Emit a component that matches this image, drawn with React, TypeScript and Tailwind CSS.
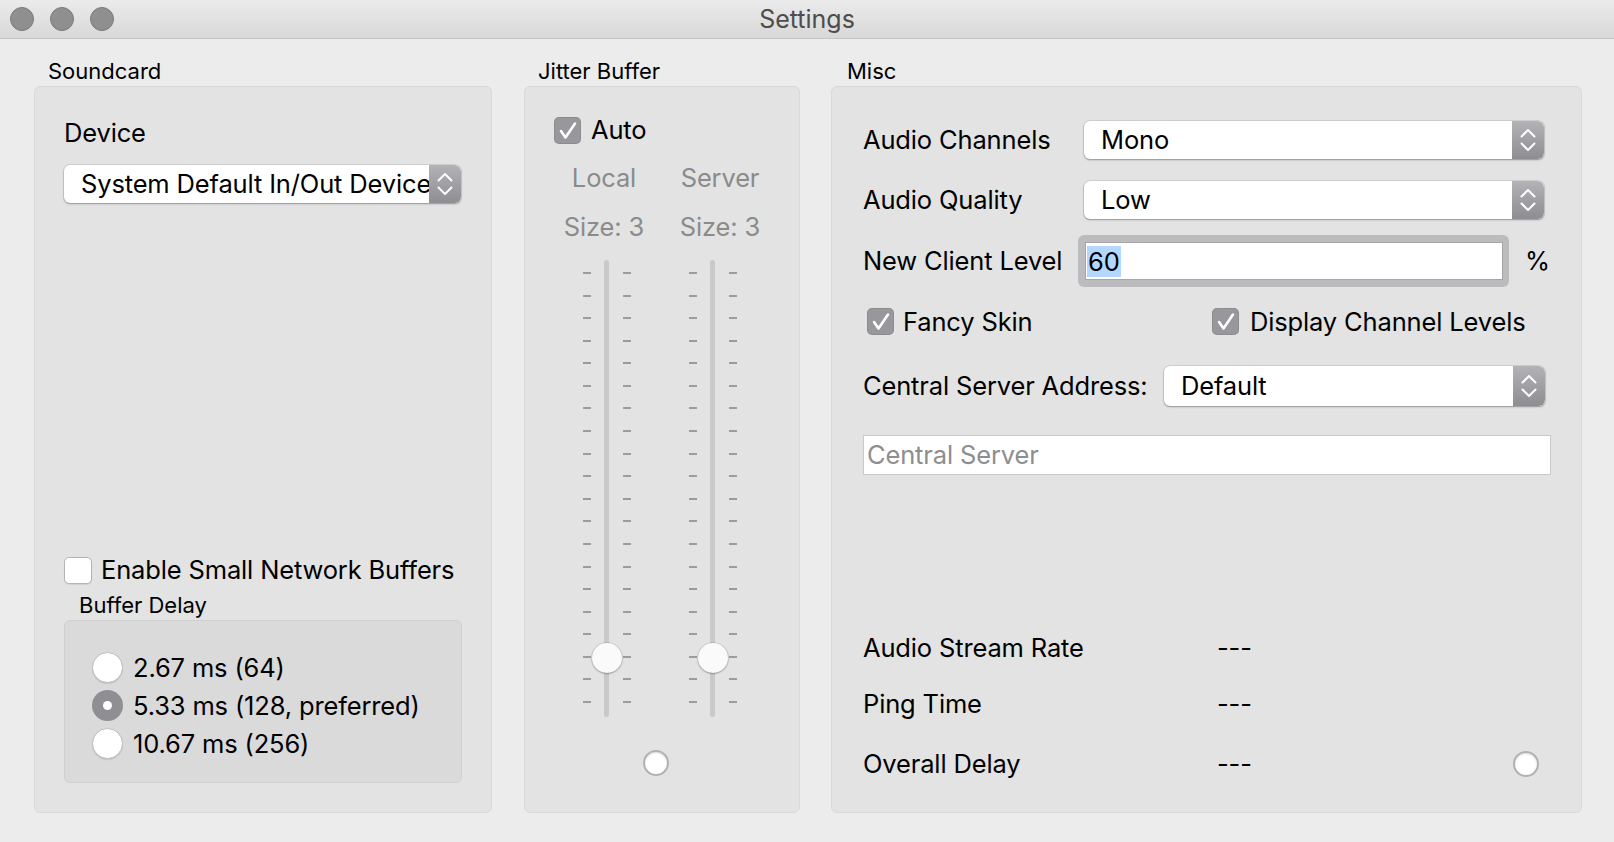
import React from "react";

const body = "text-[25.5px] leading-[30px] tracking-[-0.15px]";

// stepper arrows shown on the right of a popup button
function Stepper() {
  return (
    <div className="flex h-full w-[32px] shrink-0 items-center justify-center rounded-r-[6px] bg-gradient-to-b from-[#b3b3b7] to-[#8d8d92]">
      <svg width="32" height="38" viewBox="0 0 32 38" fill="none">
        <polyline points="9.5,15.5 16,9 22.5,15.5" stroke="white" strokeWidth="2" strokeLinecap="round" strokeLinejoin="round" />
        <polyline points="9.5,22.5 16,29 22.5,22.5" stroke="white" strokeWidth="2" strokeLinecap="round" strokeLinejoin="round" />
      </svg>
    </div>
  );
}

function Select({ value, className }: { value: string; className: string }) {
  return (
    <div className={`flex overflow-hidden rounded-[6px] bg-white shadow-[0_0_0_1px_rgba(0,0,0,0.08),0_1px_2px_rgba(0,0,0,0.3)] ${className}`}>
      <div className="flex flex-1 items-center overflow-hidden whitespace-nowrap pl-[17px] text-black">{value}</div>
      <Stepper />
    </div>
  );
}

function Checkbox({ checked }: { checked: boolean }) {
  if (!checked) {
    return <div className="h-[27px] w-[28px] shrink-0 rounded-[5px] border border-[#b4b4b4] bg-white shadow-[0_1px_1px_rgba(0,0,0,0.08)]" />;
  }
  return (
    <div className="flex h-[27px] w-[27px] shrink-0 items-center justify-center rounded-[5px] bg-[#98989c] shadow-[inset_0_0_0_1px_rgba(0,0,0,0.08)]">
      <svg width="27" height="27" viewBox="0 0 27 27" fill="none">
        <polyline points="7,14 11.5,20.5 21,6.5" stroke="white" strokeWidth="2.6" strokeLinecap="round" strokeLinejoin="round" />
      </svg>
    </div>
  );
}

function Radio({ checked, label }: { checked: boolean; label: string }) {
  return (
    <div className="flex h-[31px] items-center gap-[10px]">
      {checked ? (
        <div className="flex h-[31px] w-[31px] items-center justify-center rounded-full bg-[#8e8e93]">
          <div className="h-[9px] w-[9px] rounded-full bg-white" />
        </div>
      ) : (
        <div className="h-[31px] w-[31px] rounded-full border border-[#bdbdbd] bg-white shadow-[0_1px_1px_rgba(0,0,0,0.1)]" />
      )}
      <span className="whitespace-nowrap">{label}</span>
    </div>
  );
}

function Led() {
  return <div className="h-[26px] w-[26px] shrink-0 rounded-full border-[2px] border-[#b2b2b2] bg-white shadow-[inset_0_1px_2px_rgba(0,0,0,0.15)]" />;
}

const ticks = Array.from({ length: 20 }, (_, i) => i);

function TickColumn() {
  return (
    <div className="flex h-full w-[8px] flex-col justify-between pb-[14px] pt-[12px]">
      {ticks.map((t) => (
        <div key={t} className="h-[2px] w-[8px] bg-[#9c9c9c]" />
      ))}
    </div>
  );
}

function Fader() {
  return (
    <div className="flex h-[457px] w-[48px]">
      <TickColumn />
      <div className="relative ml-[13px] h-full w-[5px] rounded-full bg-[#c9c9c9]">
        <div className="absolute left-[-12.5px] top-[383px] h-[30px] w-[30px] rounded-full bg-[#fafafa] shadow-[0_0_0_1px_rgba(0,0,0,0.08),0_1px_2px_rgba(0,0,0,0.25)]" />
      </div>
      <div className="ml-[14px] h-full">
        <TickColumn />
      </div>
    </div>
  );
}

function GroupTitle({ children }: { children: React.ReactNode }) {
  return <div className="h-[47px] pl-[14px] pt-[19px] text-[22px] leading-[26px] tracking-normal text-black">{children}</div>;
}

export default function App() {
  return (
    <div className={`flex h-[842px] w-[1614px] flex-col overflow-hidden bg-[#ececec] font-[family-name:Inter,sans-serif] text-black ${body}`}>
      {/* title bar */}
      <div className="grid h-[39px] shrink-0 grid-cols-[1fr_auto_1fr] items-center border-b border-[#c4c4c4] bg-gradient-to-b from-[#ebebeb] to-[#d8d8d8]">
        <div className="flex gap-[16px] pl-[10px]">
          <div className="h-[24px] w-[24px] rounded-full border border-[#7b7b7b] bg-[#8f8f8f]" />
          <div className="h-[24px] w-[24px] rounded-full border border-[#7b7b7b] bg-[#8f8f8f]" />
          <div className="h-[24px] w-[24px] rounded-full border border-[#7b7b7b] bg-[#8f8f8f]" />
        </div>
        <div className="text-[25px] leading-[30px] tracking-normal text-[#4d4d4d]">Settings</div>
        <div />
      </div>

      <div className="flex gap-[32px] pl-[34px]">
        {/* Soundcard */}
        <div className="flex w-[458px] flex-col">
          <GroupTitle>Soundcard</GroupTitle>
          <div className="flex h-[727px] flex-col justify-between rounded-[6px] border border-[#d9d9d9] bg-[#e3e3e3] px-[29px] pb-[29px] pt-[31px]">
            <div className="flex flex-col">
              <div>Device</div>
              <Select value="System Default In/Out Device" className="mt-[17px] h-[38px] w-[397px]" />
            </div>
            <div className="flex flex-col">
              <div className="flex h-[30px] items-center gap-[9px]">
                <Checkbox checked={false} />
                <span className="whitespace-nowrap">Enable Small Network Buffers</span>
              </div>
              <div className="mt-[8px] pl-[15px] text-[22px] leading-[24px] tracking-normal">Buffer Delay</div>
              <div className="mt-[3px] flex h-[163px] w-[398px] flex-col gap-[7px] rounded-[6px] border border-[#d0d0d0] bg-[#dadada] pl-[27px] pt-[31px]">
                <Radio checked={false} label="2.67 ms (64)" />
                <Radio checked={true} label="5.33 ms (128, preferred)" />
                <Radio checked={false} label="10.67 ms (256)" />
              </div>
            </div>
          </div>
        </div>

        {/* Jitter Buffer */}
        <div className="flex w-[276px] flex-col">
          <GroupTitle>Jitter Buffer</GroupTitle>
          <div className="flex h-[727px] flex-col rounded-[6px] border border-[#d9d9d9] bg-[#e3e3e3] pt-[28px]">
            <div className="flex h-[30px] items-center gap-[10px] pl-[29px]">
              <Checkbox checked={true} />
              <span>Auto</span>
            </div>
            <div className="ml-[27px] mt-[18px] flex gap-[12px] text-[#8b8b8b]">
              <div className="flex w-[104px] flex-col items-center gap-[19px]">
                <span>Local</span>
                <span>Size: 3</span>
              </div>
              <div className="flex w-[104px] flex-col items-center gap-[19px]">
                <span>Server</span>
                <span>Size: 3</span>
              </div>
            </div>
            <div className="ml-[58px] mt-[18px] flex gap-[58px]">
              <Fader />
              <Fader />
            </div>
            <div className="ml-[118px] mt-[33px]">
              <Led />
            </div>
          </div>
        </div>

        {/* Misc */}
        <div className="ml-[-1px] flex w-[751px] flex-col">
          <GroupTitle>
            <span className="pl-[2px]">Misc</span>
          </GroupTitle>
          <div className="flex h-[727px] flex-col rounded-[6px] border border-[#d9d9d9] bg-[#e3e3e3] pb-[33px] pl-[31px] pt-[34px]">
            <div className="flex h-[38px] items-center">
              <span className="w-[221px]">Audio Channels</span>
              <Select value="Mono" className="h-[38px] w-[460px]" />
            </div>
            <div className="mt-[22px] flex h-[38px] items-center">
              <span className="w-[221px]">Audio Quality</span>
              <Select value="Low" className="h-[38px] w-[460px]" />
            </div>
            <div className="mt-[16px] flex h-[52px] items-center">
              <span className="w-[215px]">New Client Level</span>
              <div className="h-[52px] w-[431px] rounded-[6px] bg-[#bcbcbf] p-[7px] pr-[6px]">
                <div className="flex h-full items-center border border-[#a6a6a6] bg-white pl-[1px]">
                  <span className="bg-[#b3d7ff] px-[1px] leading-[31px]">60</span>
                </div>
              </div>
              <span className="ml-[16px]">%</span>
            </div>
            <div className="mt-[21px] flex h-[27px] items-center pl-[4px]">
              <div className="flex w-[345px] items-center gap-[9px]">
                <Checkbox checked={true} />
                <span>Fancy Skin</span>
              </div>
              <div className="flex items-center gap-[11px]">
                <Checkbox checked={true} />
                <span>Display Channel Levels</span>
              </div>
            </div>
            <div className="mt-[31px] flex h-[40px] items-center">
              <span className="w-[301px]">Central Server Address:</span>
              <Select value="Default" className="h-[40px] w-[381px]" />
            </div>
            <div className="mt-[29px] flex h-[40px] w-[688px] items-center border border-[#c9c9c9] bg-white pl-[3px] text-[#8e8e8e]">
              Central Server
            </div>

            <div className="mt-auto flex h-[30px] items-center">
              <span className="w-[354px]">Audio Stream Rate</span>
              <span>---</span>
            </div>
            <div className="mt-[26px] flex h-[30px] items-center">
              <span className="w-[354px]">Ping Time</span>
              <span>---</span>
            </div>
            <div className="mt-[30px] flex h-[30px] items-center pr-[42px]">
              <span className="w-[354px]">Overall Delay</span>
              <span>---</span>
              <div className="ml-auto">
                <Led />
              </div>
            </div>
          </div>
        </div>
      </div>
    </div>
  );
}
